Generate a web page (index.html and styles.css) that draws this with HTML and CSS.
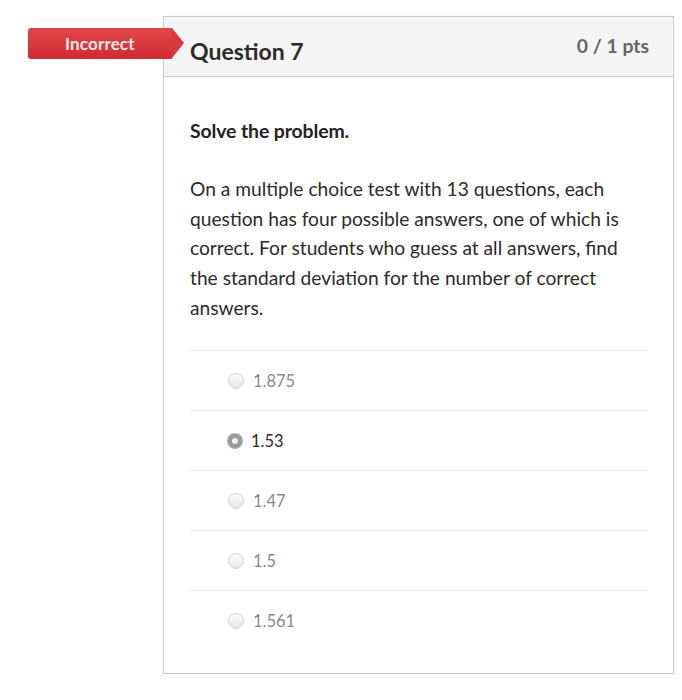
FILE: index.html
```html
<!DOCTYPE html>
<html>
<head>
<meta charset="utf-8">
<link rel="stylesheet" href="styles.css">
</head>
<body>
<div class="page">
  <div class="card">
    <div class="badge">Incorrect</div>
    <div class="header">
      <div class="title">Question 7</div>
      <div class="pts">0 / 1 pts</div>
    </div>
    <div class="body">
      <p class="lead">Solve the problem.</p>
      <p class="text">On a multiple choice test with 13 questions, each question has four possible answers, one of which is correct. For students who guess at all answers, find the standard deviation for the number of correct answers.</p>
      <div class="answers">
        <div class="answer"><span class="radio"></span><span class="label">1.875</span></div>
        <div class="answer selected"><span class="radio"></span><span class="label">1.53</span></div>
        <div class="answer"><span class="radio"></span><span class="label">1.47</span></div>
        <div class="answer"><span class="radio"></span><span class="label">1.5</span></div>
        <div class="answer"><span class="radio"></span><span class="label">1.561</span></div>
      </div>
    </div>
  </div>
</div>
</body>
</html>
```
FILE: styles.css
```css
html, body {
  margin: 0;
  padding: 0;
  background: #ffffff;
}
body {
  font-family: Lato, "Open Sans", "Liberation Sans", sans-serif;
  color: #2d3b45;
}
.page {
  padding: 16px 0 0 163px;
}
.card {
  position: relative;
  width: 511px;
  box-sizing: border-box;
  border: 1px solid #c9cdd0;
  box-shadow: 0 0 1px #dde0e2;
  background: #fff;
}
.badge {
  position: absolute;
  left: -136px;
  top: 11px;
  width: 144px;
  height: 31px;
  box-sizing: border-box;
  padding-left: 37px;
  line-height: 31px;
  font-size: 17px;
  font-weight: 700;
  letter-spacing: 0.15px;
  color: #fbeaea;
  background: linear-gradient(#e2464b, #cf2a31);
  border-radius: 3px 0 0 3px;
}
.badge::after {
  content: "";
  position: absolute;
  right: -12px;
  top: 0;
  border-top: 15.5px solid transparent;
  border-bottom: 15.5px solid transparent;
  border-left: 12px solid #d8373d;
}
.header {
  display: flex;
  justify-content: space-between;
  align-items: flex-start;
  height: 60px;
  box-sizing: border-box;
  padding: 0 24px 0 26px;
  background: #f5f5f5;
  border-bottom: 1px solid #c9cdd0;
}
.title {
  font-size: 23px;
  font-weight: 700;
  color: #2b2b2b;
  margin-top: 20px;
  line-height: 28px;
}
.pts {
  font-size: 19.4px;
  font-weight: 700;
  color: #666;
  margin-top: 17px;
  line-height: 24px;
}
.body {
  padding: 40px 24px 23px 26px;
}
.lead {
  margin: 0;
  font-size: 19.4px;
  font-weight: 700;
  color: #222;
  line-height: 28px;
  letter-spacing: -0.1px;
}
.text {
  margin: 29px 12px 0 0;
  font-size: 19.2px;
  line-height: 29.7px;
  color: #2b2b2b;
}
.answers {
  margin-top: 27px;
}
.answer {
  display: flex;
  align-items: center;
  height: 57px;
  padding-top: 2px;
  border-top: 1px solid #ececec;
  padding-left: 38px;
  font-size: 16.5px;
  color: #8a8a8a;
}
.answer.selected {
  color: #2b2b2b;
}
.radio {
  width: 14px;
  height: 14px;
  border-radius: 50%;
  border: 1px solid #d6d6d6;
  background: linear-gradient(#fbfbfb, #e9e9e9);
  margin-right: 9px;
  box-sizing: content-box;
}
.answer.selected .radio {
  width: 6px;
  height: 6px;
  border: 4px solid #9a9a9a;
  background: #eeeeee;
  box-shadow: 0 0 0 1px #b0b0b0;
}
.label {
  line-height: 20px;
}
```
